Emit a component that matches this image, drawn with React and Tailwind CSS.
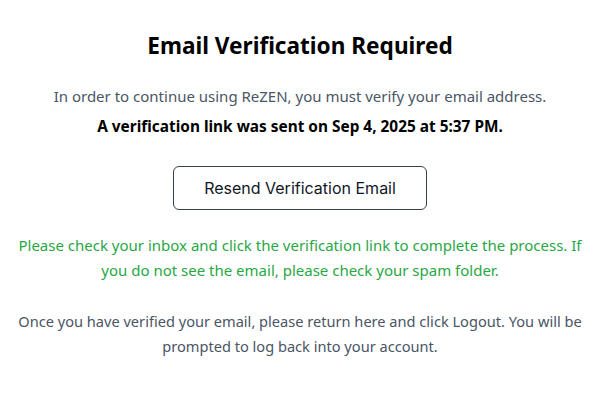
import React from 'react';

export default function App() {
  return (
    <div className="min-h-screen w-full bg-white" style={{ fontFamily: '"Noto Sans", "Open Sans", sans-serif' }}>
      <div className="w-[600px] px-[2px] pt-[30px] flex flex-col items-center text-center">
        <h1 className="text-[22.6px] leading-[32px] font-bold text-black">Email Verification Required</h1>
        <p className="mt-[24px] text-[15px] leading-[20px] text-gray-600">
          In order to continue using ReZEN, you must verify your email address.
        </p>
        <p className="mt-[11px] text-[15.4px] leading-[20px] font-bold text-black">
          A verification link was sent on Sep 4, 2025 at 5:37 PM.
        </p>
        <button
          type="button"
          className="mt-[29px] w-[254px] h-[44px] rounded-md border border-gray-700 bg-white text-[16px] text-gray-900"
          style={{ fontFamily: 'Inter, sans-serif' }}
        >
          Resend Verification Email
        </button>
        <p className="mt-[23px] max-w-[588px] text-[15px] leading-[25px] text-[#28a745]">
          Please check your inbox and click the verification link to complete the process. If you do not see the email, please check your spam folder.
        </p>
        <p className="mt-[26px] text-[14.6px] leading-[25px] text-gray-600">
          Once you have verified your email, please return here and click Logout. You will be prompted to log back into your account.
        </p>
      </div>
    </div>
  );
}
